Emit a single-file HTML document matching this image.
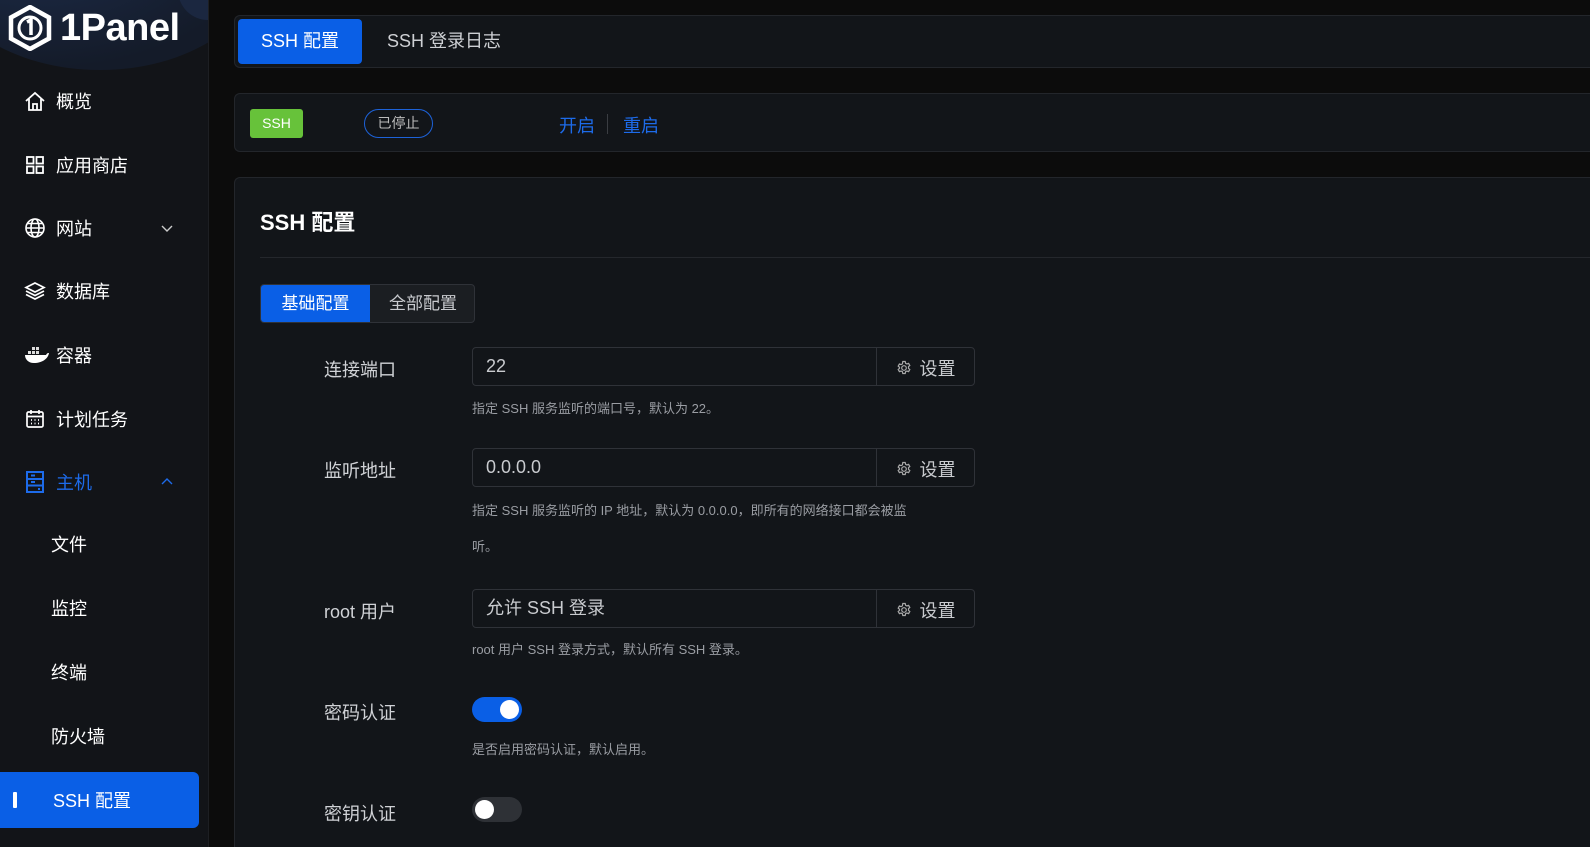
<!DOCTYPE html>
<html><head><meta charset="utf-8"><style>
*{box-sizing:border-box;margin:0;padding:0}
html{width:1590px;height:847px;overflow:hidden;background:#0c0c0c}
body{width:1590px;height:847px;overflow:hidden;background:#0c0c0c;font-family:"Liberation Sans","Noto Sans CJK SC",sans-serif;color:#e5e6eb;position:relative}
.side{position:absolute;left:0;top:0;width:209px;height:847px;background:#121418;border-right:1px solid #1d1f23;overflow:hidden}
.blob{position:absolute;left:-60px;top:-140px;width:320px;height:210px;border-radius:50%;background:radial-gradient(ellipse at 30% 40%,#1d2c4a,#141b29 70%);}
.blob2{position:absolute;left:178px;top:-40px;width:60px;height:60px;border-radius:50%;background:#1b2740}
.logo{position:absolute;left:8px;top:5px;display:flex;align-items:center;gap:8px;font-weight:bold;font-size:38px;color:#fff;letter-spacing:-0.5px}
.it{position:absolute;left:0;width:208px;height:60px;display:flex;align-items:center;font-size:18px;color:#fff}
.it svg{position:absolute;left:24px}
.it span{position:absolute;left:56px}
.it .ch{position:absolute;left:160px}
.sub span{left:51px}
.act{background:#0a5fe6;left:0;width:199px;border-radius:0 6px 6px 0;height:56px}
.act:before{content:"";position:absolute;left:13px;top:20px;width:4px;height:16px;background:#fff;border-radius:1px}
.card{position:absolute;left:234px;right:0;background:#121519;border:1px solid #23262b;border-right:none;border-radius:6px 0 0 6px}
.lbl{position:absolute;left:324px;font-size:18px;color:#d0d2d6}
.inp{position:absolute;left:472px;width:503px;height:39px;border:1px solid #2f3238;border-radius:4px;display:flex}
.inp .v{flex:1;padding-left:13px;font-size:18px;color:#c9cbcf;line-height:37px}
.inp .b{width:98px;border-left:1px solid #2f3238;font-size:18px;color:#c9cbcf;display:flex;align-items:center;justify-content:center;gap:8px;padding-top:2px}
.hint{position:absolute;left:472px;font-size:13px;color:#9a9da3}
.sw{position:absolute;left:472px;width:50px;height:25px;border-radius:13px}
.sw i{position:absolute;top:3px;width:19px;height:19px;border-radius:50%;background:#fff}
</style></head><body>
<div class="side">
<div class="blob"></div><div class="blob2"></div>
<div class="logo"><svg width="44" height="46" viewBox="0 0 44 46"><polygon points="22,2 41,12.5 41,33.5 22,44 3,33.5 3,12.5" fill="none" stroke="#fff" stroke-width="4.5"/><circle cx="22" cy="23" r="11" fill="none" stroke="#fff" stroke-width="3"/><path d="M19 17 L23 15 L23 30" stroke="#fff" stroke-width="3.5" fill="none"/></svg><span>1Panel</span></div>
<div class="it" style="top:71px"><svg width="22" height="22" viewBox="0 0 22 22" fill="none" stroke="#fff" stroke-width="1.8"><path d="M2 11 L11 3 L20 11 M5 9 V20 H17 V9 M9 20 V14 H13 V20"/></svg><span>概览</span></div>
<div class="it" style="top:135px"><svg width="22" height="22" viewBox="0 0 22 22" fill="none" stroke="#fff" stroke-width="1.8"><rect x="3" y="3" width="6.5" height="6.5"/><rect x="12.5" y="3" width="6.5" height="6.5"/><rect x="3" y="12.5" width="6.5" height="6.5"/><rect x="12.5" y="12.5" width="6.5" height="6.5"/></svg><span>应用商店</span></div>
<div class="it" style="top:198px"><svg width="22" height="22" viewBox="0 0 22 22" fill="none" stroke="#fff" stroke-width="1.6"><circle cx="11" cy="11" r="9"/><ellipse cx="11" cy="11" rx="4" ry="9"/><path d="M2 11H20M3.5 6.5H18.5M3.5 15.5H18.5"/></svg><span>网站</span><svg class="ch" style="left:160px" width="14" height="10" viewBox="0 0 14 10" fill="none" stroke="#ccc" stroke-width="1.4"><path d="M2 3 L7 8 L12 3"/></svg></div>
<div class="it" style="top:261px"><svg width="22" height="22" viewBox="0 0 22 22" fill="none" stroke="#fff" stroke-width="1.7"><path d="M11 3 L20 7.5 L11 12 L2 7.5Z M2 11 L11 15.5 L20 11 M2 14.5 L11 19 L20 14.5"/></svg><span>数据库</span></div>
<div class="it" style="top:325px"><svg width="26" height="20" viewBox="0 0 26 20"><path d="M1 10 H22 C23 8 24 8 25 8 C24 14 18 18 10 18 C4 18 1 14 1 10Z" fill="#fff"/><rect x="4" y="6" width="3" height="3" fill="#ddd"/><rect x="8" y="6" width="3" height="3" fill="#ddd"/><rect x="12" y="6" width="3" height="3" fill="#ddd"/><rect x="8" y="2" width="3" height="3" fill="#ddd"/><rect x="12" y="2" width="3" height="3" fill="#ddd"/></svg><span>容器</span></div>
<div class="it" style="top:389px"><svg width="22" height="22" viewBox="0 0 22 22" fill="none" stroke="#fff" stroke-width="1.7"><rect x="3" y="4" width="16" height="15" rx="1.5"/><path d="M7 2V6M15 2V6M3 8.5H19"/><path d="M7 12h1M10.5 12h1M14 12h1M7 15.5h1M10.5 15.5h1M14 15.5h1" stroke-width="1.8"/></svg><span>计划任务</span></div>
<div class="it" style="top:452px;color:#1d6bea"><svg width="22" height="24" viewBox="0 0 22 24" fill="none" stroke="#1d6bea" stroke-width="2"><rect x="3" y="2" width="16" height="20"/><path d="M3 9H19M3 15.5H19M7 5.5H11M7 12H11M14 19H16"/></svg><span>主机</span><svg class="ch" width="14" height="10" viewBox="0 0 14 10" fill="none" stroke="#1d6bea" stroke-width="1.4"><path d="M2 7 L7 2 L12 7"/></svg></div>
<div class="it sub" style="top:514px"><span>文件</span></div>
<div class="it sub" style="top:578px"><span>监控</span></div>
<div class="it sub" style="top:642px"><span>终端</span></div>
<div class="it sub" style="top:706px"><span>防火墙</span></div>
<div class="it sub act" style="top:772px"><span style="left:53px">SSH 配置</span></div>
</div>

<div class="card" style="top:15px;height:53px">
<div style="position:absolute;left:3px;top:3px;width:124px;height:45px;background:#0a5fe6;border-radius:4px;color:#fff;font-size:18px;line-height:45px;text-align:center">SSH 配置</div>
<div style="position:absolute;left:152px;top:3px;height:45px;line-height:45px;font-size:18px;color:#ced0d4">SSH 登录日志</div>
</div>

<div class="card" style="top:93px;height:59px">
<div style="position:absolute;left:15px;top:15px;width:53px;height:29px;background:#67c23a;border-radius:3px;color:#fff;font-size:14px;line-height:29px;text-align:center">SSH</div>
<div style="position:absolute;left:129px;top:15px;width:69px;height:29px;border:1px solid #1d62d8;border-radius:15px;color:#bbb;font-size:14px;line-height:27px;text-align:center">已停止</div>
<div style="position:absolute;left:324px;top:18px;font-size:18px;color:#1d6bea">开启</div>
<div style="position:absolute;left:372px;top:20px;width:1px;height:20px;background:#3a3d42"></div>
<div style="position:absolute;left:388px;top:18px;font-size:18px;color:#1d6bea">重启</div>
</div>

<div class="card" style="top:177px;height:680px">
<div style="position:absolute;left:25px;top:27px;font-size:22px;font-weight:bold;color:#fff">SSH 配置</div>
<div style="position:absolute;left:25px;top:79px;right:0;height:1px;background:#24272c"></div>
<div style="position:absolute;left:25px;top:106px;width:215px;height:39px;border:1px solid #2f3238;border-radius:4px;background:#1b1e22;overflow:hidden">
<div style="position:absolute;left:0;top:0;width:109px;height:39px;background:#0a5fe6;color:#fff;font-size:17px;line-height:37px;text-align:center">基础配置</div>
<div style="position:absolute;left:109px;top:0;width:106px;color:#c9cbcf;font-size:17px;line-height:37px;text-align:center">全部配置</div>
</div>
</div>

<svg width="0" height="0" style="position:absolute"><defs><symbol id="g" viewBox="0 0 16 16"><g fill="none" stroke="#aaa" stroke-width="1.2"><circle cx="8" cy="8" r="2.3"/><path d="M6.8 1.5h2.4l.4 1.8 1.3.7 1.7-.6 1.2 2.1-1.3 1.2v1.6l1.3 1.2-1.2 2.1-1.7-.6-1.3.7-.4 1.8H6.8l-.4-1.8-1.3-.7-1.7.6-1.2-2.1 1.3-1.2V7.3L2.2 6.1l1.2-2.1 1.7.6 1.3-.7z"/></g></symbol></defs></svg>

<div class="lbl" style="top:356px">连接端口</div>
<div class="inp" style="top:347px"><div class="v">22</div><div class="b"><svg width="16" height="16"><use href="#g"/></svg>设置</div></div>
<div class="hint" style="top:398px">指定 SSH 服务监听的端口号，默认为 22。</div>

<div class="lbl" style="top:457px">监听地址</div>
<div class="inp" style="top:448px"><div class="v">0.0.0.0</div><div class="b"><svg width="16" height="16"><use href="#g"/></svg>设置</div></div>
<div class="hint" style="top:500px">指定 SSH 服务监听的 IP 地址，默认为 0.0.0.0，即所有的网络接口都会被监</div>
<div class="hint" style="top:536px">听。</div>

<div class="lbl" style="top:598px">root 用户</div>
<div class="inp" style="top:589px"><div class="v">允许 SSH 登录</div><div class="b"><svg width="16" height="16"><use href="#g"/></svg>设置</div></div>
<div class="hint" style="top:639px">root 用户 SSH 登录方式，默认所有 SSH 登录。</div>

<div class="lbl" style="top:699px">密码认证</div>
<div class="sw" style="top:697px;background:#0a5fe6"><i style="left:28px"></i></div>
<div class="hint" style="top:739px">是否启用密码认证，默认启用。</div>

<div class="lbl" style="top:800px">密钥认证</div>
<div class="sw" style="top:797px;background:#2e3136"><i style="left:3px"></i></div>
</body></html>
